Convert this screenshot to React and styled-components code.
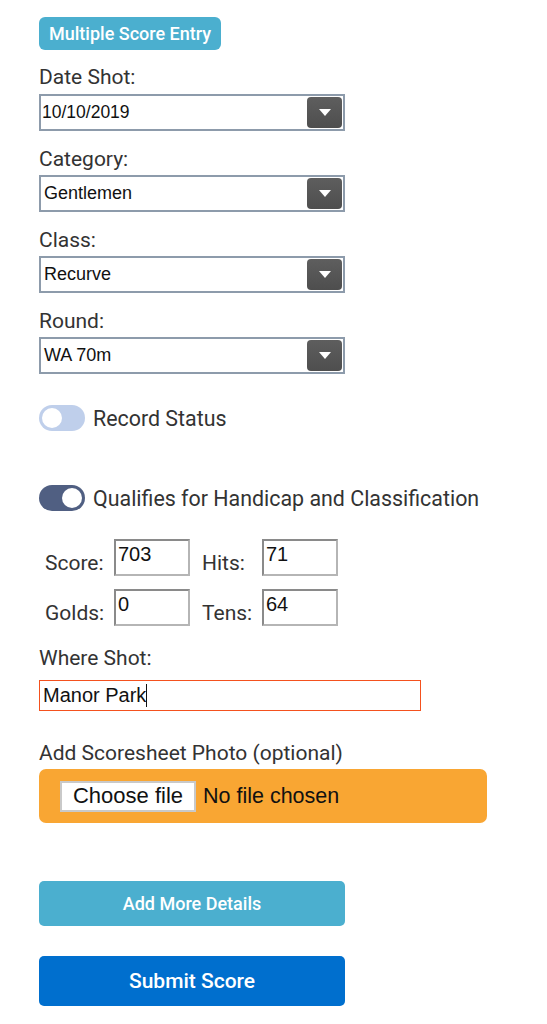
import React from "react";
import styled, { createGlobalStyle } from "styled-components";

const Global = createGlobalStyle`
  html, body { margin: 0; padding: 0; background: #fff; }
  body { font-family: Roboto, "Noto Sans", sans-serif; color: #333; }
  * { box-sizing: border-box; }
`;

const Page = styled.div`
  display: flex;
  flex-direction: column;
  align-items: flex-start;
  padding: 17px 0 0 39px;
  width: 547px;
  height: 1024px;
  overflow: hidden;
`;

const Badge = styled.div`
  display: flex;
  align-items: center;
  height: 33px;
  padding: 0 10px;
  border-radius: 6px;
  background: #4bafcf;
  color: #fff;
  font-size: 18px;
  font-weight: 500;
  margin-bottom: 15px;
`;

const Label = styled.div`
  font-size: 21px;
  line-height: 24px;
  color: #333;
  margin-bottom: ${(p) => p.$mb ?? 4}px;
`;

const Field = styled.div`
  display: flex;
  flex-direction: column;
  margin-bottom: ${(p) => p.$mb ?? 16}px;
`;

const SelectBox = styled.div`
  width: 306px;
  height: 37px;
  border: 2px solid #8d9bab;
  display: flex;
  align-items: center;
  justify-content: space-between;
  padding: 0 1px 0 ${(p) => p.$pl ?? 3}px;
  font-family: "Liberation Sans", Arial, sans-serif;
  font-size: ${(p) => p.$fs ?? 18}px;
  color: #111;
  background: #fff;
`;

const ArrowBtn = styled.div`
  width: 35px;
  height: 31px;
  border-radius: 4px;
  background: linear-gradient(#5e5e5e, #4e4e4e);
  display: flex;
  align-items: center;
  justify-content: center;
`;

const Select = ({ value, pl, fs }) => (
  <SelectBox $pl={pl} $fs={fs}>
    <span>{value}</span>
    <ArrowBtn>
      <svg width="12" height="7" viewBox="0 0 12 7">
        <path d="M0 0 H12 L6 7 Z" fill="#fff" />
      </svg>
    </ArrowBtn>
  </SelectBox>
);

const ToggleRow = styled.div`
  display: flex;
  align-items: center;
  gap: 8px;
  height: 30px;
  margin-top: ${(p) => p.$mt}px;
  font-size: 21.4px;
  color: #333;
`;

const Track = styled.div`
  width: 46px;
  height: 26px;
  border-radius: 13px;
  background: ${(p) => (p.$on ? "#505f82" : "#bfcfeb")};
  display: flex;
  align-items: center;
  justify-content: ${(p) => (p.$on ? "flex-end" : "flex-start")};
  padding: 0 3px;
`;

const Knob = styled.div`
  width: 20px;
  height: 20px;
  border-radius: 50%;
  background: #fff;
`;

const ScoreGrid = styled.div`
  display: grid;
  grid-template-columns: 69px 76px 12px 60px 76px;
  grid-auto-rows: 37px;
  row-gap: 13px;
  margin-top: 26px;
  padding-left: 6px;
`;

const ScoreLabel = styled.div`
  grid-column: ${(p) => p.$col};
  font-size: 21px;
  color: #333;
  align-self: end;
  padding-bottom: 1px;
  line-height: 24px;
  white-space: nowrap;
`;

const ScoreInput = styled.div`
  grid-column: ${(p) => p.$col};
  border: 2px solid #8a8a8a;
  border-right-color: #b5b5b5;
  border-bottom-color: #b5b5b5;
  font-family: "Liberation Sans", Arial, sans-serif;
  font-size: 20px;
  line-height: 22px;
  color: #111;
  padding: 2px 0 0 2px;
`;

const TextInput = styled.div`
  width: 382px;
  height: 31px;
  border: 1px solid #f4511e;
  font-family: "Liberation Sans", Arial, sans-serif;
  font-size: 20px;
  color: #111;
  display: flex;
  align-items: center;
  padding-left: 3px;
`;

const Caret = styled.span`
  display: inline-block;
  width: 1px;
  height: 23px;
  background: #111;
`;

const FileBox = styled.div`
  width: 448px;
  height: 54px;
  border-radius: 7px;
  background: #f9a633;
  display: flex;
  align-items: center;
  gap: 7px;
  padding-left: 21px;
  font-family: "Liberation Sans", Arial, sans-serif;
  font-size: 21.5px;
  color: #111;
`;

const FileButton = styled.div`
  width: 136px;
  height: 31px;
  background: #fff;
  border: 2px solid #c9c9c9;
  display: flex;
  align-items: center;
  justify-content: center;
  font-size: 22px;
`;

const ActionButton = styled.div`
  width: 306px;
  height: ${(p) => p.$h}px;
  margin-top: ${(p) => p.$mt}px;
  border-radius: 5px;
  background: ${(p) => p.$bg};
  color: #fff;
  font-size: ${(p) => p.$fs}px;
  font-weight: 500;
  display: flex;
  align-items: center;
  justify-content: center;
`;

export default function App() {
  return (
    <>
      <Global />
      <Page>
        <Badge>Multiple Score Entry</Badge>
        <Field>
          <Label $mb={5}>Date Shot:</Label>
          <Select value="10/10/2019" pl={1} fs={17.5} />
        </Field>
        <Field>
          <Label>Category:</Label>
          <Select value="Gentlemen" />
        </Field>
        <Field>
          <Label>Class:</Label>
          <Select value="Recurve" />
        </Field>
        <Field $mb={0}>
          <Label>Round:</Label>
          <Select value="WA 70m" />
        </Field>

        <ToggleRow $mt={29}>
          <Track>
            <Knob />
          </Track>
          Record Status
        </ToggleRow>
        <ToggleRow $mt={50}>
          <Track $on>
            <Knob />
          </Track>
          Qualifies for Handicap and Classification
        </ToggleRow>

        <ScoreGrid>
          <ScoreLabel $col={1}>Score:</ScoreLabel>
          <ScoreInput $col={2}>703</ScoreInput>
          <ScoreLabel $col={4}>Hits:</ScoreLabel>
          <ScoreInput $col={5}>71</ScoreInput>
          <ScoreLabel $col={1}>Golds:</ScoreLabel>
          <ScoreInput $col={2}>0</ScoreInput>
          <ScoreLabel $col={4}>Tens:</ScoreLabel>
          <ScoreInput $col={5}>64</ScoreInput>
        </ScoreGrid>

        <Label style={{ marginTop: 20 }} $mb={10}>Where Shot:</Label>
        <TextInput>
          Manor Park<Caret />
        </TextInput>

        <Label style={{ marginTop: 30 }} $mb={4}>Add Scoresheet Photo (optional)</Label>
        <FileBox>
          <FileButton>Choose file</FileButton>
          <span>No file chosen</span>
        </FileBox>

        <ActionButton $mt={58} $h={45} $bg="#4bafcf" $fs={18}>
          Add More Details
        </ActionButton>
        <ActionButton $mt={30} $h={50} $bg="#006fce" $fs={21}>
          Submit Score
        </ActionButton>
      </Page>
    </>
  );
}
